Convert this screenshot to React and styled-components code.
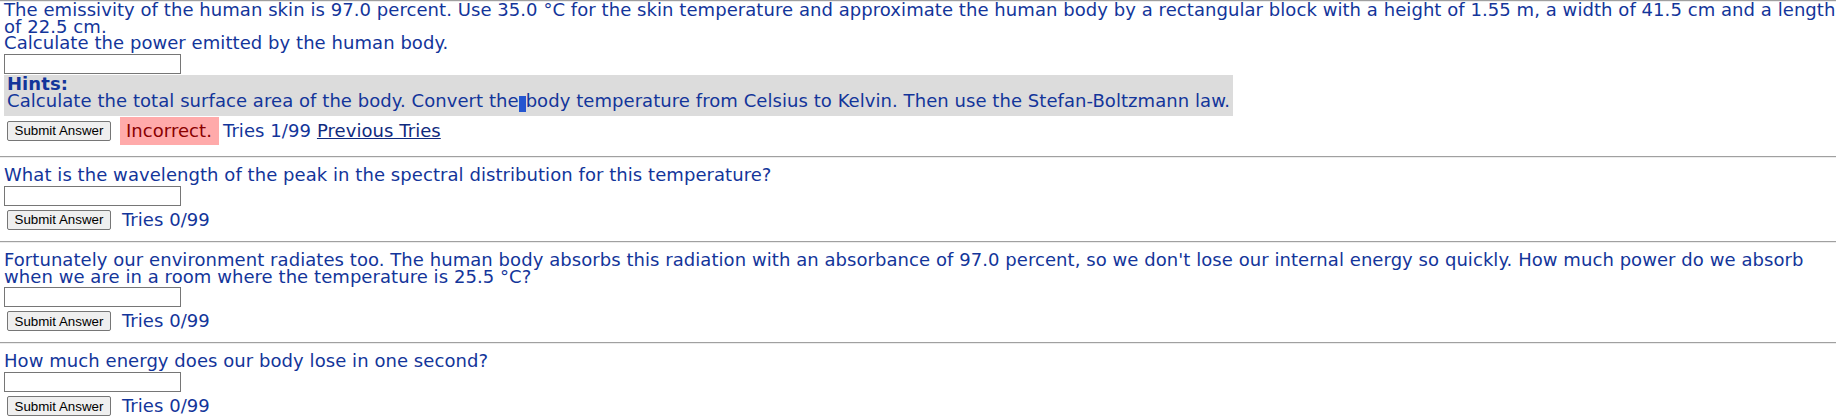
import React from "react";
import styled, { createGlobalStyle } from "styled-components";

const GlobalStyle = createGlobalStyle`
  html, body {
    margin: 0;
    padding: 0;
    background: #ffffff;
    overflow: hidden;
  }
`;

const Page = styled.div`
  width: 1846px;
  padding-left: 4px;
  font-family: "DejaVu Sans", Verdana, sans-serif;
  font-size: 18px;
  letter-spacing: 0.06px;
  line-height: 16.7px;
  color: #13359a;
`;

const Rule = styled.div`
  height: 0;
  border-top: 1px solid #a0a0a0;
  border-bottom: 1px solid #ececec;
  margin: ${(p) => (p.$first ? "0 0 0 -4px" : "11px 0 9px -4px")};
  width: calc(100% + 4px);
`;

const Section = styled.section`
  display: flex;
  flex-direction: column;
  align-items: flex-start;
`;

const Question = styled.div`
  margin: 0;
`;

const AnswerInput = styled.input`
  display: block;
  box-sizing: border-box;
  width: 177px;
  height: 20px;
  margin: 2px 0 0 0;
  border: 1px solid #767676;
  background: #ffffff;
  padding: 0 2px;
  position: relative;
`;

const Hints = styled.div`
  margin-top: 1px;
  background: #dcdcdc;
  padding: 1px 3px 4px 3px;
  line-height: 16.4px;
`;

const HintTitle = styled.div`
  font-weight: bold;
`;

const Caret = styled.span`
  display: inline-block;
  width: 7px;
  height: 16px;
  background: #2556d0;
  vertical-align: -5px;
`;

const SubmitRow = styled.div`
  display: flex;
  align-items: center;
  margin-top: ${(p) => (p.$status ? "1px" : "4px")};
  white-space: pre;
`;

const SubmitButton = styled.button`
  box-sizing: border-box;
  height: 20px;
  margin: 0 0 0 3px;
  padding: 0 6.5px;
  font-family: "Liberation Sans", Arial, sans-serif;
  font-size: 13.33px;
  letter-spacing: 0;
  color: #000000;
  background: #efefef;
  border: 1px solid #767676;
  border-radius: 2px;
`;

const Status = styled.span`
  background: #ffaaaa;
  color: #8a0000;
  padding: 6px 7px 6px 6px;
  margin-left: 9px;
`;

const Tries = styled.span`
  margin-left: ${(p) => p.$gap}px;
`;

const PrevLink = styled.a`
  color: #0f2a7e;
  text-decoration: underline;
  margin-left: 6px;
`;

function Part({ children, input = true, hints, status, tries }) {
  return (
    <Section>
      <Question>{children}</Question>
      {input && <AnswerInput type="text" />}
      {hints}
      <SubmitRow $status={!!status}>
        <SubmitButton type="button">Submit Answer</SubmitButton>
        {status && <Status>{status}</Status>}
        <Tries $gap={status ? 4 : 11}>{tries}</Tries>
        {status && <PrevLink href="#">Previous Tries</PrevLink>}
      </SubmitRow>
    </Section>
  );
}

export default function App() {
  return (
    <>
      <GlobalStyle />
      <Page>
        <Rule $first />
        <Part
          status="Incorrect."
          tries="Tries 1/99"
          hints={
            <Hints>
              <HintTitle>Hints:</HintTitle>
              <div>
                Calculate the total surface area of the body. Convert the
                <Caret />
                body temperature from Celsius to Kelvin. Then use the
                Stefan-Boltzmann law.
              </div>
            </Hints>
          }
        >
          The emissivity of the human skin is 97.0 percent. Use 35.0 °C for the
          skin temperature and approximate the human body by a rectangular block
          with a height of 1.55 m, a width of 41.5 cm and a length of 22.5 cm.
          <br />
          Calculate the power emitted by the human body.
        </Part>
        <Rule />
        <Part tries="Tries 0/99">
          What is the wavelength of the peak in the spectral distribution for
          this temperature?
        </Part>
        <Rule />
        <Part tries="Tries 0/99">
          Fortunately our environment radiates too. The human body absorbs this
          radiation with an absorbance of 97.0 percent, so we don't lose our
          internal energy so quickly. How much power do we absorb when we are in
          a room where the temperature is 25.5 °C?
        </Part>
        <Rule />
        <Part tries="Tries 0/99">
          How much energy does our body lose in one second?
        </Part>
      </Page>
    </>
  );
}
